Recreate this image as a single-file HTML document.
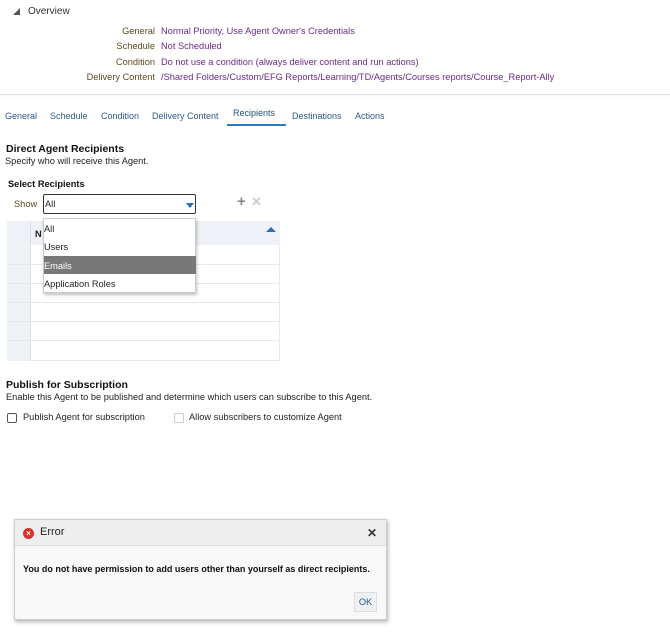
<!DOCTYPE html><html><head><style>
body{margin:0;width:670px;height:634px;background:#fff;font-family:"Liberation Sans",sans-serif;font-size:9.25px;color:#222;position:relative;overflow:hidden}
.a{position:absolute;white-space:nowrap}
.l{color:#5c4a1f;text-align:right;width:155px;left:0}
.v{color:#6b2a86;left:161px}
.t{color:#2d5a88;top:111px;font-size:9px}
.r{position:absolute;left:7px;width:273px;height:19px;border-bottom:1px solid #e8e8e8}
</style></head><body>
<div class="a" style="left:13px;top:8px;width:0;height:0;border-left:7px solid transparent;border-bottom:7px solid #555"></div>
<div class="a" style="left:28px;top:6px;font-size:10px;color:#333">Overview</div>
<div class="a l" style="top:26px">General</div><div class="a v" style="top:26px">Normal Priority, Use Agent Owner's Credentials</div>
<div class="a l" style="top:41px">Schedule</div><div class="a v" style="top:41px">Not Scheduled</div>
<div class="a l" style="top:57px">Condition</div><div class="a v" style="top:57px">Do not use a condition (always deliver content and run actions)</div>
<div class="a l" style="top:72px">Delivery Content</div><div class="a v" style="top:72px">/Shared Folders/Custom/EFG Reports/Learning/TD/Agents/Courses reports/Course_Report-Ally</div>
<div class="a" style="left:0;top:94px;width:670px;height:1px;background:#ddd;box-shadow:0 1px 2px #eee"></div>
<div class="a t" style="left:5px">General</div>
<div class="a t" style="left:50px">Schedule</div>
<div class="a t" style="left:101px">Condition</div>
<div class="a t" style="left:152px">Delivery Content</div>
<div class="a t" style="left:233px;top:108px;color:#1f4e7a">Recipients</div>
<div class="a" style="left:227px;top:124px;width:59px;height:2px;background:#2a78c0"></div>
<div class="a t" style="left:292px">Destinations</div>
<div class="a t" style="left:355px">Actions</div>
<div class="a" style="left:6px;top:143px;font-size:10.5px;font-weight:bold;color:#111">Direct Agent Recipients</div>
<div class="a" style="left:5px;top:156px">Specify who will receive this Agent.</div>
<div class="a" style="left:8px;top:179px;font-weight:bold;color:#111">Select Recipients</div>
<div class="a" style="left:14px;top:199px;color:#5c4a1f">Show</div>
<div class="a" style="left:43px;top:194px;width:151px;height:18px;border:1px solid #333;border-radius:2px"></div>
<div class="a" style="left:45px;top:199px">All</div>
<div class="a" style="left:186px;top:203px;border-left:4px solid transparent;border-right:4px solid transparent;border-top:5px solid #2a6fb8"></div>
<div class="a" style="left:237px;top:195px;font-size:15px;font-weight:bold;color:#888;line-height:14px">+</div>
<div class="a" style="left:251px;top:195px;font-size:13px;font-weight:bold;color:#ccc;line-height:14px">✕</div>
<div class="a" style="left:7px;top:221px;width:273px;height:140px;border:1px solid #e8e8e8;box-sizing:border-box"></div>
<div class="a" style="left:7px;top:221px;width:273px;height:24px;background:#eef1f5"></div>
<div class="a" style="left:7px;top:221px;width:23px;height:140px;background:#eef1f5;border-right:1px solid #e0e0e0"></div>
<div class="r" style="top:245px"></div><div class="r" style="top:264px"></div><div class="r" style="top:283px"></div><div class="r" style="top:302px"></div><div class="r" style="top:321px"></div>
<div class="a" style="left:35px;top:229px;font-weight:bold">N</div>
<div class="a" style="left:266px;top:227px;border-left:5px solid transparent;border-right:5px solid transparent;border-bottom:5px solid #2a6fb8"></div>
<div class="a" style="left:43px;top:218px;width:153px;height:75px;background:#fff;border:1px solid #ccc;box-sizing:border-box;box-shadow:1px 2px 3px rgba(0,0,0,.25)"></div>
<div class="a" style="left:44px;top:224px">All</div>
<div class="a" style="left:44px;top:242px">Users</div>
<div class="a" style="left:44px;top:256px;width:152px;height:18px;background:#787878"></div>
<div class="a" style="left:44px;top:261px;color:#fff">Emails</div>
<div class="a" style="left:44px;top:279px">Application Roles</div>
<div class="a" style="left:6px;top:379px;font-size:10.5px;font-weight:bold;color:#111">Publish for Subscription</div>
<div class="a" style="left:6px;top:392px">Enable this Agent to be published and determine which users can subscribe to this Agent.</div>
<div class="a" style="left:7px;top:413px;width:8px;height:8px;border:1px solid #555;border-radius:2px"></div>
<div class="a" style="left:23px;top:412px">Publish Agent for subscription</div>
<div class="a" style="left:174px;top:413px;width:8px;height:8px;border:1px solid #ccc;border-radius:2px"></div>
<div class="a" style="left:189px;top:412px">Allow subscribers to customize Agent</div>
<div class="a" style="left:14px;top:519px;width:373px;height:101px;background:#f8f8f8;border:1px solid #ccc;box-sizing:border-box;box-shadow:1px 2px 4px rgba(0,0,0,.3)"></div>
<div class="a" style="left:15px;top:520px;width:371px;height:25px;background:#eee;border-bottom:1px solid #ddd"></div>
<div class="a" style="left:23px;top:528px;width:11px;height:11px;border-radius:50%;background:#d8312b;color:#fff;font-size:8px;line-height:11px;text-align:center;font-weight:bold">×</div>
<div class="a" style="left:40px;top:526px;font-size:11px;color:#222">Error</div>
<div class="a" style="left:367px;top:526px;font-size:12px;font-weight:bold;color:#333">✕</div>
<div class="a" style="left:23px;top:564px;color:#111;font-weight:bold;font-size:9px">You do not have permission to add users other than yourself as direct recipients.</div>
<div class="a" style="left:354px;top:592px;width:23px;height:20px;background:#eef1f4;border:1px solid #ddd;box-sizing:border-box;color:#2d5a88;text-align:center;line-height:19px">OK</div>
</body></html>
